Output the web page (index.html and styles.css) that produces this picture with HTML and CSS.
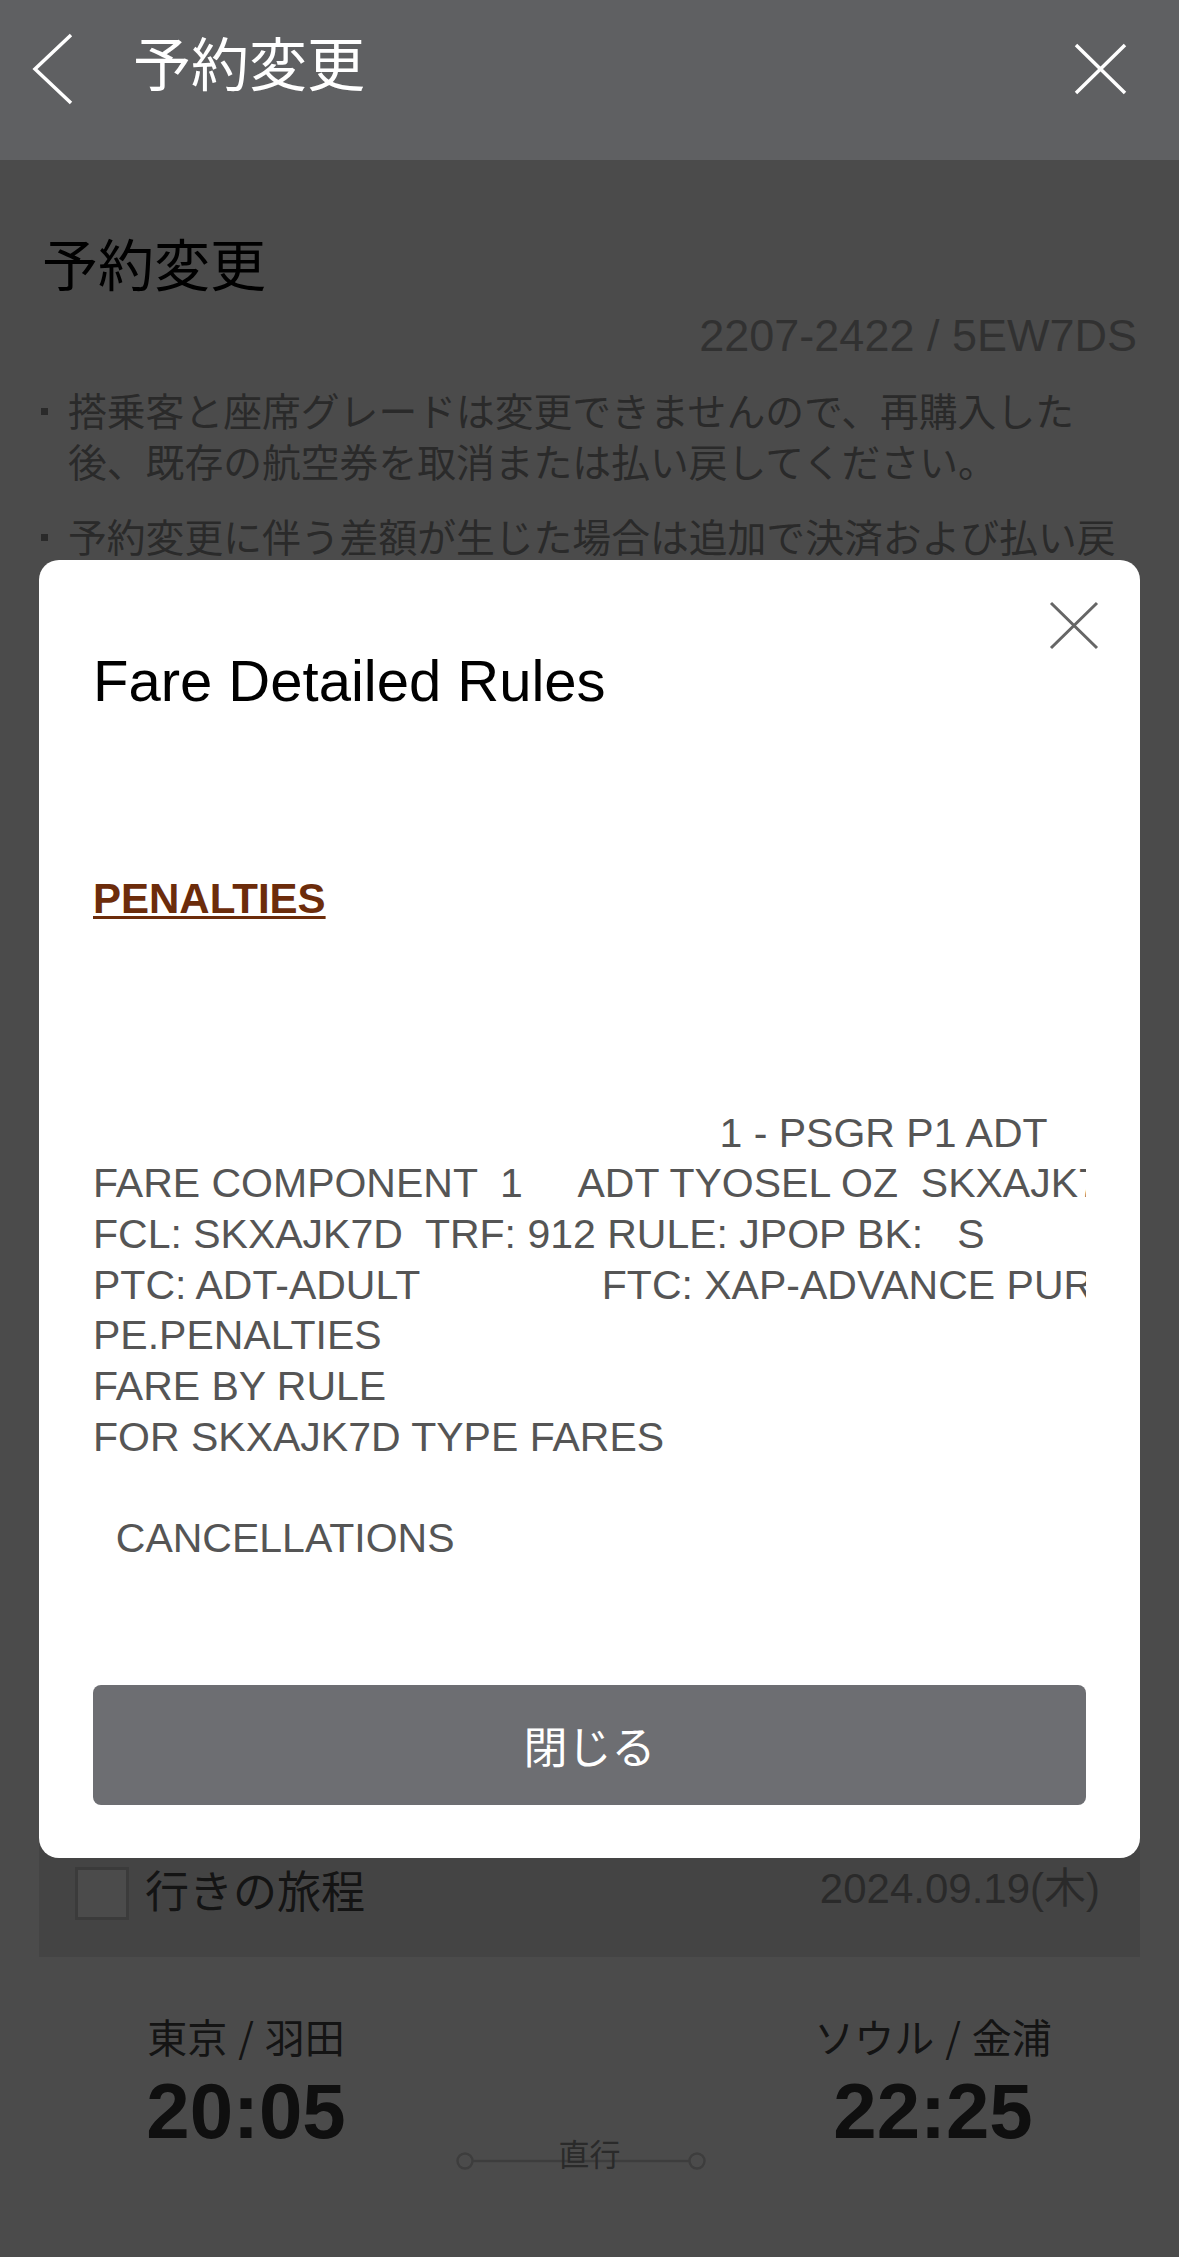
FILE: index.html
```html
<!DOCTYPE html>
<html lang="ja">
<head>
<meta charset="utf-8">
<title>予約変更</title>
<link rel="stylesheet" href="styles.css">
</head>
<body>
<header class="topbar">
  <button class="icon-btn" type="button" aria-label="戻る">
    <svg width="44" height="76" viewBox="0 0 44 76"><polyline points="40,4 4,38 40,72" fill="none" stroke="#fff" stroke-width="3.5"/></svg>
  </button>
  <h1 class="topbar-title">予約変更</h1>
  <button class="icon-btn" type="button" aria-label="閉じる">
    <svg width="57" height="56" viewBox="0 0 57 56"><path d="M4 4 L53 52 M53 4 L4 52" stroke="#fff" stroke-width="3.5"/></svg>
  </button>
</header>

<main class="page">
  <section class="intro">
    <h2 class="page-title">予約変更</h2>
    <p class="booking-ref">2207-2422 / 5EW7DS</p>
    <ul class="notes">
      <li>搭乗客と座席グレードは変更できませんので、再購入した後、既存の航空券を取消または払い戻してください。</li>
      <li>予約変更に伴う差額が生じた場合は追加で決済および払い戻しが行われます。</li>
    </ul>
  </section>

  <section class="itinerary">
    <div class="trip-head">
      <span class="checkbox"></span>
      <span class="trip-label">行きの旅程</span>
      <span class="trip-date">2024.09.19(木)</span>
    </div>
    <div class="flight">
      <div class="endpoint">
        <div class="city">東京 / 羽田</div>
        <div class="time">20:05</div>
      </div>
      <div class="route-col">
        <svg class="route" width="250" height="20" viewBox="0 0 250 20">
          <line x1="17" y1="10" x2="233" y2="10" stroke="#cfcfcf" stroke-width="2.5"/>
          <circle cx="9" cy="10" r="7.5" fill="none" stroke="#cfcfcf" stroke-width="2.5"/>
          <circle cx="241" cy="10" r="7.5" fill="none" stroke="#cfcfcf" stroke-width="2.5"/>
        </svg>
        <span class="route-label">直行</span>
      </div>
      <div class="endpoint">
        <div class="city">ソウル / 金浦</div>
        <div class="time">22:25</div>
      </div>
    </div>
  </section>
</main>

<div class="overlay">
  <div class="modal" role="dialog" aria-labelledby="fare-title">
    <button class="icon-btn modal-close" type="button" aria-label="閉じる">
      <svg width="52" height="52" viewBox="0 0 52 52"><path d="M3 3 L49 48 M49 3 L3 48" stroke="#666" stroke-width="3"/></svg>
    </button>
    <h3 class="modal-title" id="fare-title">Fare Detailed Rules</h3>
    <div class="rules">
      <p class="rules-heading">PENALTIES</p>
<pre class="rules-text">                                                       1 - PSGR P1 ADT
FARE COMPONENT  1     ADT TYOSEL OZ  SKXAJK7D
FCL: SKXAJK7D  TRF: 912 RULE: JPOP BK:   S
PTC: ADT-ADULT                FTC: XAP-ADVANCE PURCHASE
PE.PENALTIES
FARE BY RULE
FOR SKXAJK7D TYPE FARES

  CANCELLATIONS</pre>
    </div>
    <button class="modal-btn" type="button">閉じる</button>
  </div>
</div>
</body>
</html>
```

FILE: styles.css
```css
* { box-sizing: border-box; }

html, body { margin: 0; padding: 0; }

body {
  width: 1179px;
  height: 2257px;
  overflow: hidden;
  background: #fff;
  font-family: "Liberation Sans", "Noto Sans CJK JP", sans-serif;
}

.icon-btn {
  display: block;
  padding: 0;
  border: 0;
  background: none;
  line-height: 0;
}

/* header */
.topbar {
  height: 160px;
  background: #5f6062;
  display: flex;
  align-items: center;
  padding: 0 50px 22px 31px;
}

.topbar-title {
  flex: 1;
  margin: 0 0 17px 58px;
  font: 400 58px/58px "Noto Sans CJK JP", sans-serif;
  color: #fff;
}

/* page under the dialog */
.intro {
  padding: 68px 42px 0;
}

.page-title {
  margin: 0;
  font: 400 56px/67px "Noto Sans CJK JP", sans-serif;
  color: #000;
}

.booking-ref {
  margin: 14px 0 0;
  text-align: right;
  font: 400 45px/54px "Liberation Sans", sans-serif;
  color: #a8a8a8;
}

.notes {
  list-style: none;
  margin: 21px 0 0;
  padding: 0;
}

.notes li {
  position: relative;
  padding-left: 26px;
  font: 400 38.8px/51px "Noto Sans CJK JP", sans-serif;
  color: #8f8f8f;
}

.notes li + li { margin-top: 24px; }

.notes li::before {
  content: "";
  position: absolute;
  left: -1px;
  top: 24px;
  width: 7px;
  height: 7px;
  background: #8f8f8f;
}

.itinerary {
  margin-top: 1208px;
}

.trip-head {
  margin: 0 39px;
  height: 137px;
  background: #e8e8e8;
  display: flex;
  align-items: center;
  padding: 0 40px 0 36px;
}

.checkbox {
  width: 54px;
  height: 53px;
  margin-top: 10px;
  border: 3px solid #c8c8c8;
  background: #fff;
}

.trip-label {
  flex: 1;
  margin-left: 16px;
  font: 400 44px/1 "Noto Sans CJK JP", sans-serif;
  color: #444;
}

.trip-date {
  font: 400 42px/1 "Liberation Sans", "Noto Sans CJK JP", sans-serif;
  color: #909090;
}

.flight {
  margin: 0 39px;
  padding-top: 55px;
  display: grid;
  grid-template-columns: 414px 1fr 414px;
}

.endpoint { text-align: center; }

.city {
  font: 400 40px/48px "Noto Sans CJK JP", sans-serif;
  color: #444;
  word-spacing: 2px;
}

.time {
  margin-top: 12px;
  font: 700 78px/78px "Liberation Sans", sans-serif;
  color: #333;
}

.route-col { position: relative; }

.route {
  display: block;
  margin: 139px 0 0 3px;
}

.route-label {
  position: absolute;
  left: 0;
  right: 0;
  top: 125px;
  text-align: center;
  font: 400 31px/31px "Noto Sans CJK JP", sans-serif;
  color: #8f8f8f;
}

/* dialog */
.overlay {
  position: fixed;
  top: 160px;
  left: 0;
  right: 0;
  bottom: 0;
  background: rgba(0, 0, 0, 0.705);
  display: flex;
  align-items: center;
  justify-content: center;
}

.modal {
  position: relative;
  width: 1101px;
  height: 1298px;
  background: #fff;
  border-radius: 20px;
  padding: 86px 54px 53px;
  display: flex;
  flex-direction: column;
}

.modal-close {
  position: absolute;
  top: 40px;
  right: 40px;
}

.modal-title {
  margin: 0;
  font: 400 58px/70px "Liberation Sans", sans-serif;
  color: #000;
}

.rules {
  height: 925px;
  overflow: hidden;
}

.rules-heading {
  margin: 158px 0 0;
  font: 700 42px/50px "Liberation Sans", sans-serif;
  color: #6c2c0b;
  text-decoration: underline;
  text-decoration-thickness: 3px;
  text-underline-offset: 3px;
}

.rules-text {
  margin: 184px 0 0;
  font: 400 41px/50.7px "Liberation Sans", sans-serif;
  color: #555;
  white-space: pre;
}

.modal-btn {
  margin-top: 44px;
  width: 100%;
  height: 120px;
  flex: none;
  border: 0;
  border-radius: 8px;
  background: #6d6e72;
  color: #fff;
  font: 400 44px/1 "Noto Sans CJK JP", sans-serif;
}
```
